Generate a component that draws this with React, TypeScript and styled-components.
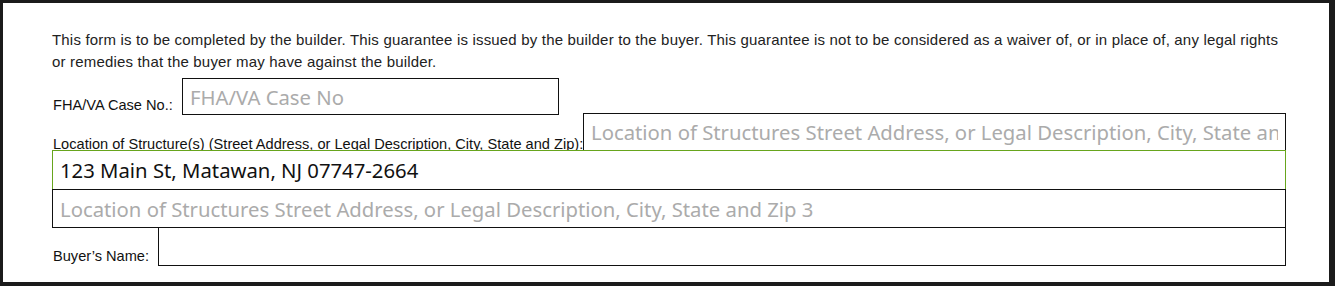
import styled, { createGlobalStyle } from "styled-components";

const GlobalStyle = createGlobalStyle`
  html, body {
    margin: 0;
    padding: 0;
    height: 286px;
    background: #1b1b1b;
    overflow: hidden;
  }
`;

const Frame = styled.div`
  box-sizing: border-box;
  margin: 3px 6px 0 3px;
  height: 279px;
  background: #ffffff;
  padding: 26px 0 0 49px;
`;

const Intro = styled.p`
  margin: 0;
  font-family: "Liberation Sans", Arial, sans-serif;
  font-size: 15px;
  letter-spacing: 0.18px;
  line-height: 22px;
  color: #222;
  white-space: nowrap;
`;

const Form = styled.div`
  width: 1234px;
  margin-top: 5px;
  display: flex;
  flex-direction: column;
`;

const Row = styled.div<{ $overlap?: number }>`
  display: flex;
  align-items: flex-end;
  margin-top: ${(p) => -(p.$overlap ?? 0)}px;
`;

const Label = styled.label<{ $w: number; $lift?: number }>`
  flex: none;
  box-sizing: border-box;
  width: ${(p) => p.$w}px;
  padding: 0 0 ${(p) => p.$lift ?? 0}px 1px;
  font-family: "Liberation Sans", Arial, sans-serif;
  font-size: 14.6px;
  line-height: 14px;
  color: #111;
  white-space: nowrap;
`;

const Field = styled.input<{ $w?: number; $h: number; $active?: boolean; $overlap?: number }>`
  box-sizing: border-box;
  display: block;
  width: ${(p) => (p.$w ? `${p.$w}px` : "auto")};
  flex: ${(p) => (p.$w ? "none" : "1 1 auto")};
  min-width: 0;
  height: ${(p) => p.$h}px;
  margin: ${(p) => -(p.$overlap ?? 0)}px 0 0 0;
  padding: 0 7px;
  border: 1px solid ${(p) => (p.$active ? "#67a51d" : "#111")};
  border-radius: 0;
  background: #fff;
  outline: none;
  font-family: "Noto Sans", "Open Sans", sans-serif;
  font-size: 20.3px;
  color: #111;

  &::placeholder {
    color: #ababab;
    opacity: 1;
  }
`;

export default function App() {
  return (
    <>
      <GlobalStyle />
      <Frame>
        <Intro>
          This form is to be completed by the builder. This guarantee is issued by the builder to the buyer. This
          guarantee is not to be considered as a waiver of, or in place of, any legal rights
          <br />
          or remedies that the buyer may have against the builder.
        </Intro>
        <Form>
          <Row>
            <Label $w={130} $lift={3}>FHA/VA Case No.:</Label>
            <Field $w={377} $h={37} placeholder="FHA/VA Case No" />
          </Row>
          <Row $overlap={2}>
            <Label $w={531}>
              Location of Structure(s) (Street Address, or Legal Description, City, State and Zip):
            </Label>
            <Field $h={38} placeholder="Location of Structures Street Address, or Legal Description, City, State and Zip" />
          </Row>
          <Field
            $h={40}
            $active
            $overlap={1}
            defaultValue="123 Main St, Matawan, NJ 07747-2664"
          />
          <Field
            $h={39}
            $overlap={1}
            placeholder="Location of Structures Street Address, or Legal Description, City, State and Zip 3"
          />
          <Row $overlap={1}>
            <Label $w={106} $lift={3}>Buyer’s Name:</Label>
            <Field $h={39} />
          </Row>
        </Form>
      </Frame>
    </>
  );
}
